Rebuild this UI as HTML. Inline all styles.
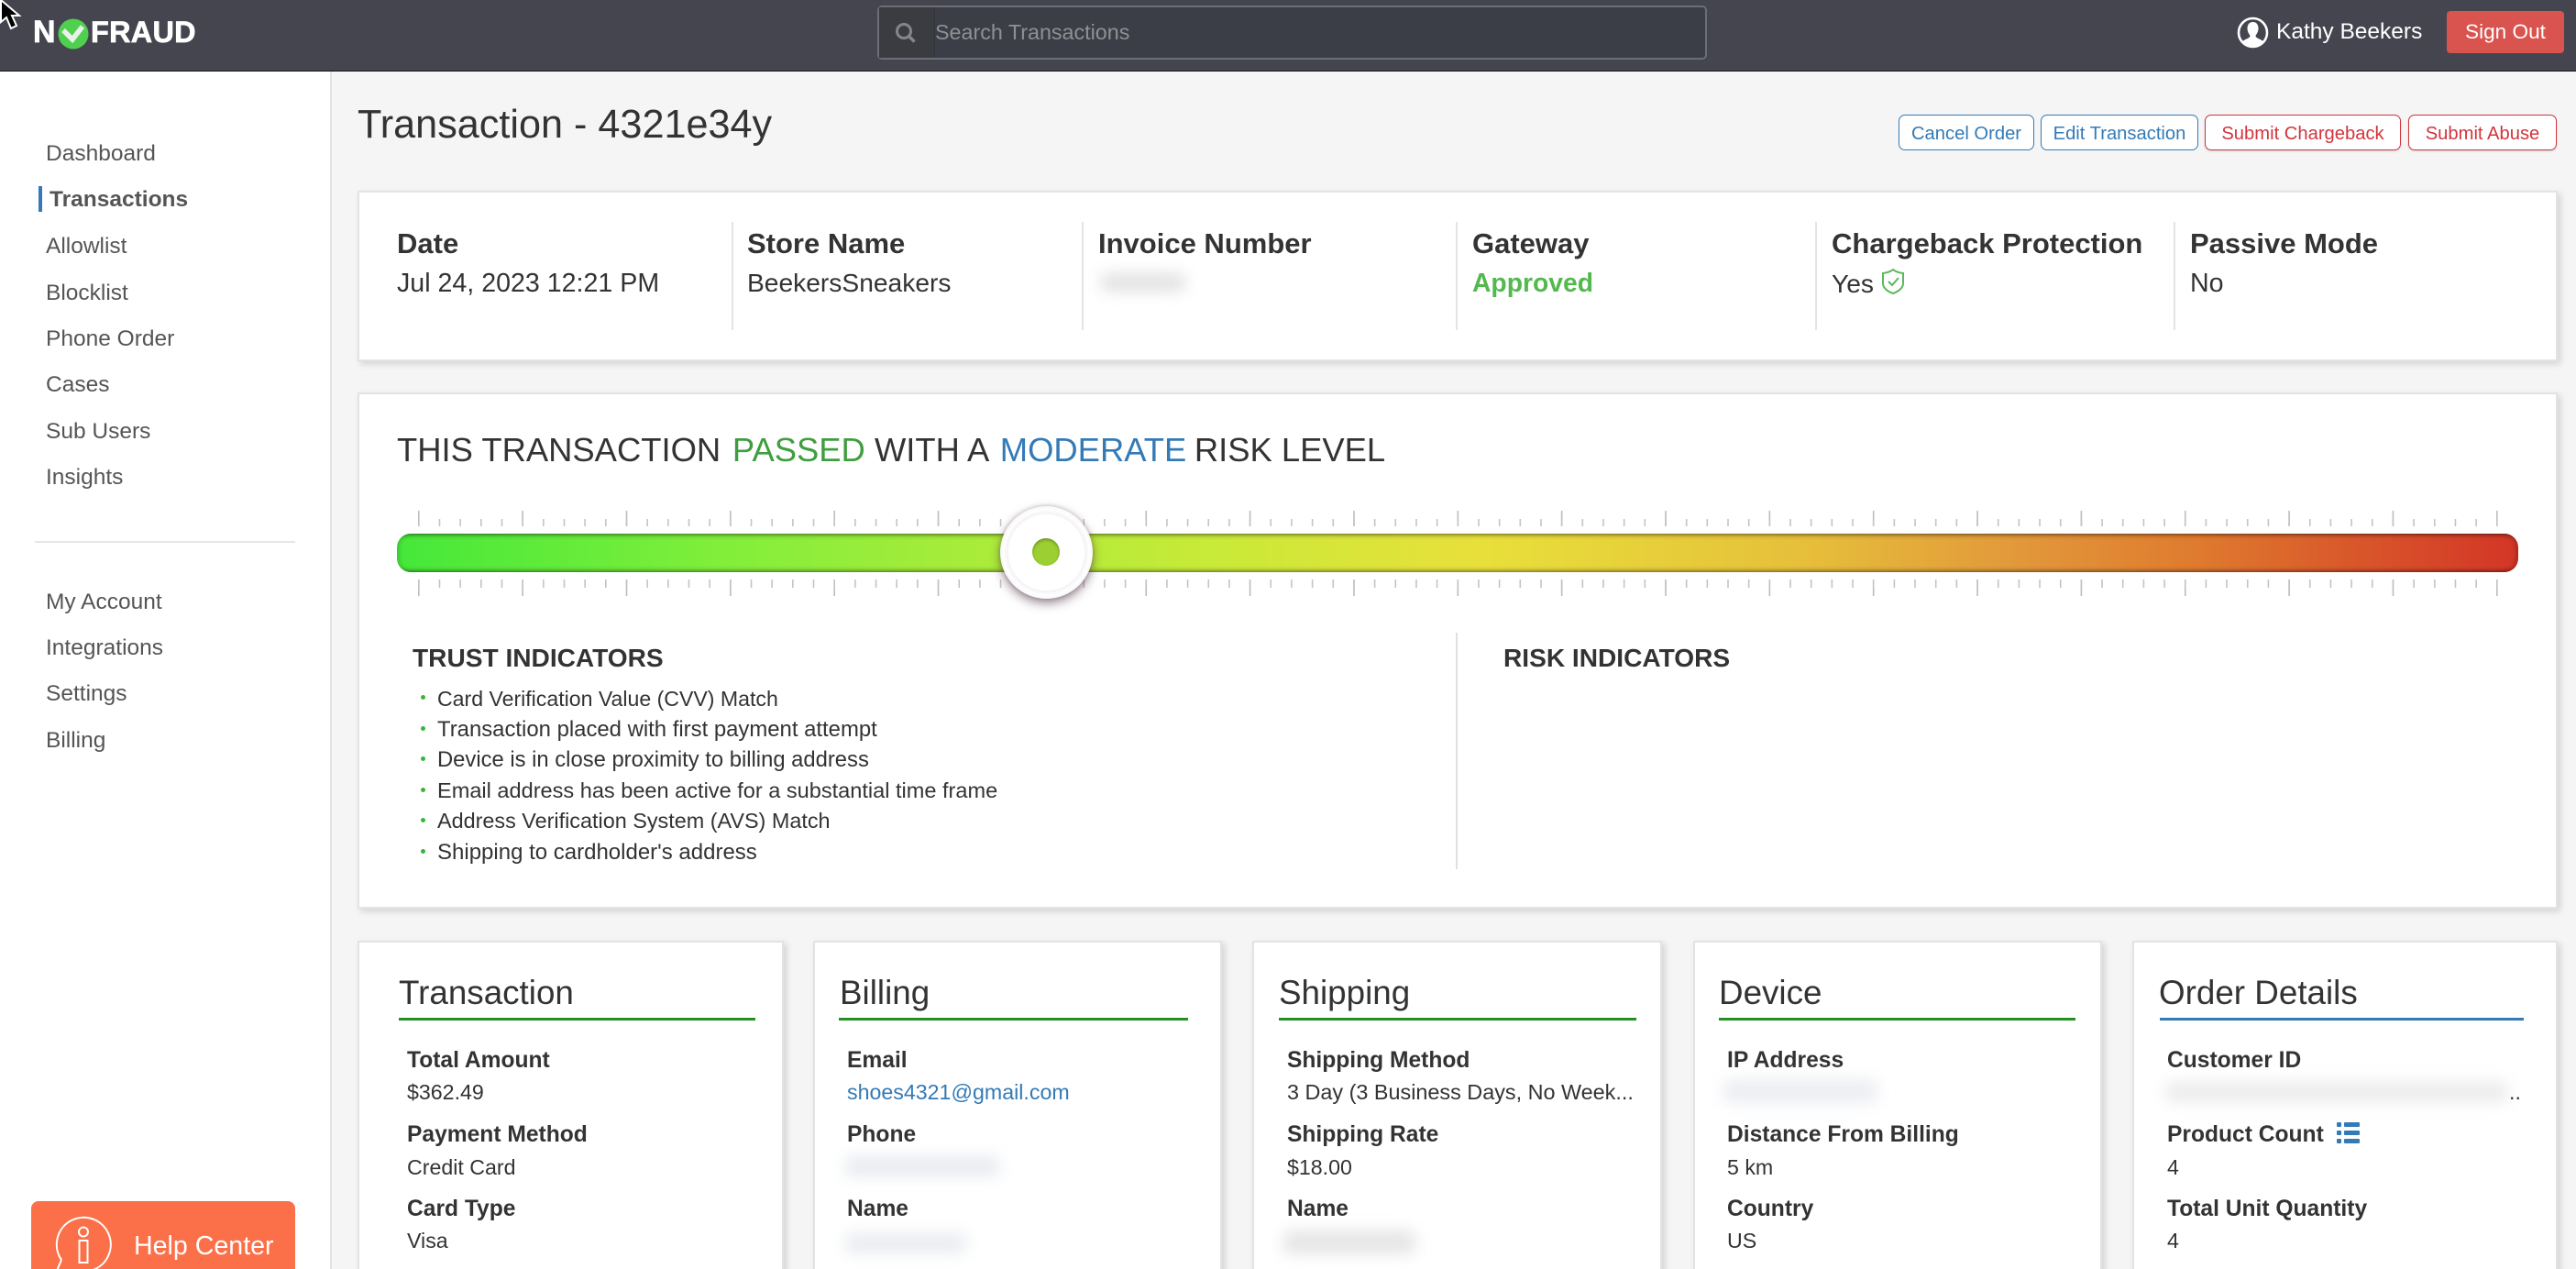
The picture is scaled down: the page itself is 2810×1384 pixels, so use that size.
<!DOCTYPE html>
<html><head><meta charset="utf-8"><title>Transaction</title>
<style>
html,body{margin:0;padding:0;width:2810px;height:1384px;overflow:hidden}
#w{position:relative;width:2810px;height:1384px;overflow:hidden;background:#f5f5f5;font-family:"Liberation Sans",sans-serif;color:#333}
.a{position:absolute}
.t{position:absolute;white-space:nowrap;line-height:40px;height:40px}
.card{position:absolute;background:#fff;border:2px solid #e3e3e3;box-sizing:border-box;box-shadow:3px 3px 7px rgba(0,0,0,.14)}
.nav{font-size:24.5px;color:#555;left:50px}
.h{font-size:31px;font-weight:bold;color:#333}
.v{font-size:28.6px}
.vd{position:absolute;top:242px;width:2px;height:118px;background:#e4e4e4}
.btn{position:absolute;top:125px;height:39px;box-sizing:border-box;background:#fff;border-radius:7px;font-size:20.2px;line-height:40px;text-align:center;white-space:nowrap}
.bl{border:1.5px solid #337ab7;color:#337ab7}
.rd{border:1.5px solid #d2343c;color:#d2343c;box-shadow:0 1px 2px rgba(0,0,0,.15)}
.li{left:477px}
.dot{position:absolute;left:459px;width:5px;height:5px;border-radius:50%;background:#3cb43c}
.ct{font-size:36.8px;font-weight:normal}
.ul{position:absolute;top:1110px;height:3px;background:#229122}
.lb{font-size:24.6px;font-weight:bold}
.vl{font-size:23.2px}
.blur{position:absolute;filter:blur(8px);border-radius:6px}
</style></head><body>
<div id="w">

<!-- header -->
<div class="a" style="left:0;top:0;width:2810px;height:77px;background:#454550;border-bottom:1.5px solid #15151a"></div>
<div class="t" style="left:36px;top:15px;font-size:34px;font-weight:bold;color:#fff;-webkit-text-stroke:.7px #fff">N</div>
<svg class="a" style="left:62px;top:19px" width="36" height="36" viewBox="0 0 36 36"><circle cx="18" cy="18" r="16.5" fill="#4fd04f"/><path d="M7 14l10 10L28 10" fill="none" stroke="#e9f2e9" stroke-width="5.500"/></svg>
<div class="t" style="left:99px;top:15px;font-size:32.4px;font-weight:bold;color:#fff;-webkit-text-stroke:.7px #fff;letter-spacing:.3px">FRAUD</div>
<svg class="a" style="left:0;top:0" width="26" height="36" viewBox="0 0 26 36"><path d="M1 0v24l6-5 5 12 6-3-5-11h8z" fill="#000" stroke="#fff" stroke-width="2"/></svg>

<div class="a" style="left:957px;top:6px;width:905px;height:59px;box-sizing:border-box;background:#3c3e47;border:2px solid #6d6e75;border-radius:5px"></div>
<div class="a" style="left:959px;top:8px;width:60px;height:55px;background:#3a3c42;border-right:1px solid #34353b"></div>
<svg class="a" style="left:976px;top:24px" width="24" height="24" viewBox="0 0 24 24"><circle cx="10" cy="10" r="7.500" fill="none" stroke="#85868a" stroke-width="3"/><path d="M15.500 15.500l6 6" stroke="#85868a" stroke-width="3.400"/></svg>
<div class="t" style="left:1020px;top:15px;font-size:23.3px;color:#8f9094">Search Transactions</div>

<svg class="a" style="left:2440px;top:18px" width="35" height="35" viewBox="0 0 35 35"><circle cx="17.500" cy="17.500" r="15.500" fill="#454550" stroke="#fff" stroke-width="2.600"/><path d="M17.500 6c4 0 6 3 6 7s-2 6-3 8c0 2 3 3 5 4 1 .6 2 1 3 2-2.500 3-6.500 5-11 5s-8.500-2-11-5c1-1 2-1.400 3-2 2-1 5-2 5-4-1-2-3-4-3-8s2-7 6-7z" fill="#fff"/></svg>
<div class="t" style="left:2483px;top:15px;font-size:24.5px;color:#fff">Kathy Beekers</div>
<div class="a" style="left:2669px;top:12px;width:128px;height:46px;background:#d9534f;border-radius:4px;color:#fff;font-size:22.6px;line-height:46px;text-align:center">Sign Out</div>

<!-- sidebar -->
<div class="a" style="left:0;top:78px;width:360px;height:1306px;background:#fff;border-right:2px solid #e3e3e3"></div>
<div class="t nav" style="top:148px">Dashboard</div>
<div class="a" style="left:42px;top:203px;width:4px;height:28px;background:#337ab7"></div>
<div class="t nav" style="left:54px;top:198px;font-weight:bold">Transactions</div>
<div class="t nav" style="top:249px">Allowlist</div>
<div class="t nav" style="top:300px">Blocklist</div>
<div class="t nav" style="top:350px">Phone Order</div>
<div class="t nav" style="top:400px">Cases</div>
<div class="t nav" style="top:451px">Sub Users</div>
<div class="t nav" style="top:501px">Insights</div>
<div class="a" style="left:38px;top:590px;width:284px;height:2px;background:#e6e6e6"></div>
<div class="t nav" style="top:637px">My Account</div>
<div class="t nav" style="top:687px">Integrations</div>
<div class="t nav" style="top:737px">Settings</div>
<div class="t nav" style="top:788px">Billing</div>
<div class="a" style="left:34px;top:1310px;width:288px;height:80px;background:#fb7049;border-radius:8px 8px 0 0"></div>
<svg class="a" style="left:58px;top:1326px" width="66" height="58" viewBox="0 0 66 58"><path d="M9 48A29.500 29.500 0 1 1 42 59.500M9 48L4 60" fill="none" stroke="#fff" stroke-width="2"/><circle cx="33" cy="17.500" r="5" fill="none" stroke="#fff" stroke-width="2"/><rect x="28.500" y="27" width="9" height="24" fill="none" stroke="#fff" stroke-width="2"/></svg>
<div class="t" style="left:146px;top:1339px;font-size:28.6px;color:#fff">Help Center</div>

<!-- title bar -->
<div class="t" style="left:390px;top:116px;font-size:43.2px;color:#333">Transaction - 4321e34y</div>
<div class="btn bl" style="left:2071px;width:148px">Cancel Order</div>
<div class="btn bl" style="left:2226px;width:172px">Edit Transaction</div>
<div class="btn rd" style="left:2405px;width:214px">Submit Chargeback</div>
<div class="btn rd" style="left:2627px;width:162px">Submit Abuse</div>

<!-- info card -->
<div class="card" style="left:390px;top:208px;width:2400px;height:186px"></div>
<div class="vd" style="left:798px"></div><div class="vd" style="left:1180px"></div><div class="vd" style="left:1588px"></div><div class="vd" style="left:1980px"></div><div class="vd" style="left:2371px"></div>
<div class="t h" style="left:433px;top:246px">Date</div>
<div class="t v" style="left:433px;top:288.500px">Jul 24, 2023 12:21 PM</div>
<div class="t h" style="left:815px;top:246px">Store Name</div>
<div class="t v" style="left:815px;top:288px;font-size:28.2px">BeekersSneakers</div>
<div class="t h" style="left:1198px;top:246px">Invoice Number</div>
<div class="blur" style="left:1201px;top:298px;width:92px;height:20px;background:#e2e2e2"></div>
<div class="t h" style="left:1606px;top:246px">Gateway</div>
<div class="t v" style="left:1606px;top:288px;font-weight:bold;color:#53b94f;font-size:28.3px">Approved</div>
<div class="t h" style="left:1998px;top:246px">Chargeback Protection</div>
<div class="t v" style="left:1998px;top:288.500px;font-size:28.2px">Yes</div>
<svg class="a" style="left:2052px;top:292px" width="26" height="30" viewBox="0 0 26 30"><path d="M13 2c3 2.500 6 3.500 11 4v11c0 5-5 9-11 11C7 26 2 22 2 17V6c5-.5 8-1.500 11-4z" fill="none" stroke="#5cb85c" stroke-width="2"/><path d="M8 15l4 4 7-8" fill="none" stroke="#5cb85c" stroke-width="2"/></svg>
<div class="t h" style="left:2389px;top:246px">Passive Mode</div>
<div class="t v" style="left:2389px;top:288.500px">No</div>

<!-- risk card -->
<div class="card" style="left:390px;top:428px;width:2400px;height:563px"></div>
<div class="t" style="left:433px;top:470.500px;font-size:36.4px">THIS TRANSACTION <span style="color:#3f9e3f;margin-left:2.6px">PASSED</span> WITH A <span style="color:#337ab7;margin-left:3.4px;margin-right:-1.6px">MODERATE</span> RISK LEVEL</div>

<svg class="a" style="left:0;top:0" width="2810" height="700" fill="none">
<line x1="456" x2="2726" y1="565.500" y2="565.500" stroke="#bdbdbd" stroke-width="17" stroke-dasharray="1.6 111.75"/>
<line x1="456" x2="2726" y1="570" y2="570" stroke="#c4c4c4" stroke-width="8" stroke-dasharray="1.6 21.07"/>
<line x1="456" x2="2726" y1="641" y2="641" stroke="#bdbdbd" stroke-width="18" stroke-dasharray="1.6 111.75"/>
<line x1="456" x2="2726" y1="636.500" y2="636.500" stroke="#c4c4c4" stroke-width="9" stroke-dasharray="1.6 21.07"/>
</svg>

<div class="a" style="left:433px;top:582px;width:2314px;height:42px;border-radius:15px;background:linear-gradient(180deg,rgba(0,0,0,.3) 0,rgba(0,0,0,.16) 2px,rgba(0,0,0,.06) 4px,rgba(0,0,0,0) 7px,rgba(0,0,0,0) 35px,rgba(0,0,0,.06) 38px,rgba(0,0,0,.16) 40px,rgba(0,0,0,.3) 42px),linear-gradient(90deg,#45e83a 0%,#80ee3a 15%,#a2ec3a 25%,#c8ea38 38%,#e8e03a 51%,#e6c03a 66%,#e2963a 77%,#df7a2e 85%,#d9582b 92%,#d33526 100%);box-shadow:inset 3px 0 4px rgba(0,0,0,.14),inset -3px 0 4px rgba(0,0,0,.2)"></div>

<div class="a" style="left:1091px;top:552px;width:101px;height:101px;border-radius:50%;background:radial-gradient(circle at 50% 50%,#fff 0,#fff 41px,#f3f3f3 42.500px,#fafafa 45px,#fff 47px,#f4f4f4 51px);box-shadow:0 5px 11px rgba(75,45,65,.55),0 0 4px rgba(75,45,65,.3)"></div>
<div class="a" style="left:1126px;top:587px;width:30px;height:30px;border-radius:50%;background:#9ccf32;box-shadow:inset 0 2px 3px rgba(0,0,0,.28)"></div>

<div class="t" style="left:450px;top:698px;font-size:28.1px;font-weight:bold">TRUST INDICATORS</div>
<div class="t" style="left:1640px;top:698px;font-size:28.1px;font-weight:bold">RISK INDICATORS</div>
<div class="a" style="left:1588px;top:690px;width:2px;height:258px;background:#e0e0e0"></div>
<div class="dot" style="top:758px"></div><div class="t li" style="top:742px;font-size:23.1px">Card Verification Value (CVV) Match</div>
<div class="dot" style="top:792px"></div><div class="t li" style="top:776px;font-size:23.9px">Transaction placed with first payment attempt</div>
<div class="dot" style="top:825px"></div><div class="t li" style="top:809px;font-size:23.8px">Device is in close proximity to billing address</div>
<div class="dot" style="top:859px"></div><div class="t li" style="top:842px;font-size:23.55px">Email address has been active for a substantial time frame</div>
<div class="dot" style="top:892px"></div><div class="t li" style="top:875px;font-size:23.4px">Address Verification System (AVS) Match</div>
<div class="dot" style="top:926px"></div><div class="t li" style="top:910px;font-size:24px">Shipping to cardholder's address</div>

<!-- bottom cards -->
<div class="card" style="left:390px;top:1026px;width:465px;height:380px"></div>
<div class="card" style="left:887px;top:1026px;width:446px;height:380px"></div>
<div class="card" style="left:1366px;top:1026px;width:447px;height:380px"></div>
<div class="card" style="left:1847px;top:1026px;width:446px;height:380px"></div>
<div class="card" style="left:2326px;top:1026px;width:464px;height:380px"></div>

<!-- Transaction -->
<div class="t ct" style="left:435px;top:1063px">Transaction</div>
<div class="ul" style="left:435px;width:389px"></div>
<div class="t lb" style="left:444px;top:1137px">Total Amount</div>
<div class="t vl" style="left:444px;top:1171px">$362.49</div>
<div class="t lb" style="left:444px;top:1218px">Payment Method</div>
<div class="t vl" style="left:444px;top:1253px">Credit Card</div>
<div class="t lb" style="left:444px;top:1299px">Card Type</div>
<div class="t vl" style="left:444px;top:1333px">Visa</div>

<!-- Billing -->
<div class="t ct" style="left:916px;top:1063px">Billing</div>
<div class="ul" style="left:915px;width:381px"></div>
<div class="t lb" style="left:924px;top:1137px">Email</div>
<div class="t vl" style="left:924px;top:1171px;color:#337ab7">shoes4321@gmail.com</div>
<div class="t lb" style="left:924px;top:1218px">Phone</div>
<div class="blur" style="left:922px;top:1261px;width:168px;height:22px;background:#e8ebf0"></div>
<div class="t lb" style="left:924px;top:1299px">Name</div>
<div class="blur" style="left:922px;top:1345px;width:132px;height:22px;background:#e9ecf1"></div>

<!-- Shipping -->
<div class="t ct" style="left:1395px;top:1063px">Shipping</div>
<div class="ul" style="left:1395px;width:390px"></div>
<div class="t lb" style="left:1404px;top:1137px">Shipping Method</div>
<div class="t vl" style="left:1404px;top:1171px;font-size:23.4px">3 Day (3 Business Days, No Week...</div>
<div class="t lb" style="left:1404px;top:1218px">Shipping Rate</div>
<div class="t vl" style="left:1404px;top:1253px">$18.00</div>
<div class="t lb" style="left:1404px;top:1299px">Name</div>
<div class="blur" style="left:1400px;top:1342px;width:144px;height:26px;background:#e6e6e6"></div>

<!-- Device -->
<div class="t ct" style="left:1875px;top:1063px">Device</div>
<div class="ul" style="left:1875px;width:389px"></div>
<div class="t lb" style="left:1884px;top:1137px">IP Address</div>
<div class="blur" style="left:1880px;top:1177px;width:168px;height:26px;background:#eceef2"></div>
<div class="t lb" style="left:1884px;top:1218px">Distance From Billing</div>
<div class="t vl" style="left:1884px;top:1253px">5 km</div>
<div class="t lb" style="left:1884px;top:1299px">Country</div>
<div class="t vl" style="left:1884px;top:1333px">US</div>

<!-- Order Details -->
<div class="t ct" style="left:2355px;top:1063px">Order Details</div>
<div class="ul" style="left:2356px;width:397px;background:#337ab7"></div>
<div class="t lb" style="left:2364px;top:1137px">Customer ID</div>
<div class="blur" style="left:2362px;top:1180px;width:374px;height:22px;background:#ececec"></div>
<div class="t vl" style="left:2737px;top:1171px">..</div>
<div class="t lb" style="left:2364px;top:1218px">Product Count</div>
<svg class="a" style="left:2549px;top:1224px" width="25" height="23" viewBox="0 0 25 23" fill="#337ab7"><rect x="0" y="0" width="5" height="5" rx="1"/><rect x="8" y="0" width="17" height="5" rx="1"/><rect x="0" y="9" width="5" height="5" rx="1"/><rect x="8" y="9" width="17" height="5" rx="1"/><rect x="0" y="18" width="5" height="5" rx="1"/><rect x="8" y="18" width="17" height="5" rx="1"/></svg>
<div class="t vl" style="left:2364px;top:1253px">4</div>
<div class="t lb" style="left:2364px;top:1299px">Total Unit Quantity</div>
<div class="t vl" style="left:2364px;top:1333px">4</div>

</div>
</body></html>
